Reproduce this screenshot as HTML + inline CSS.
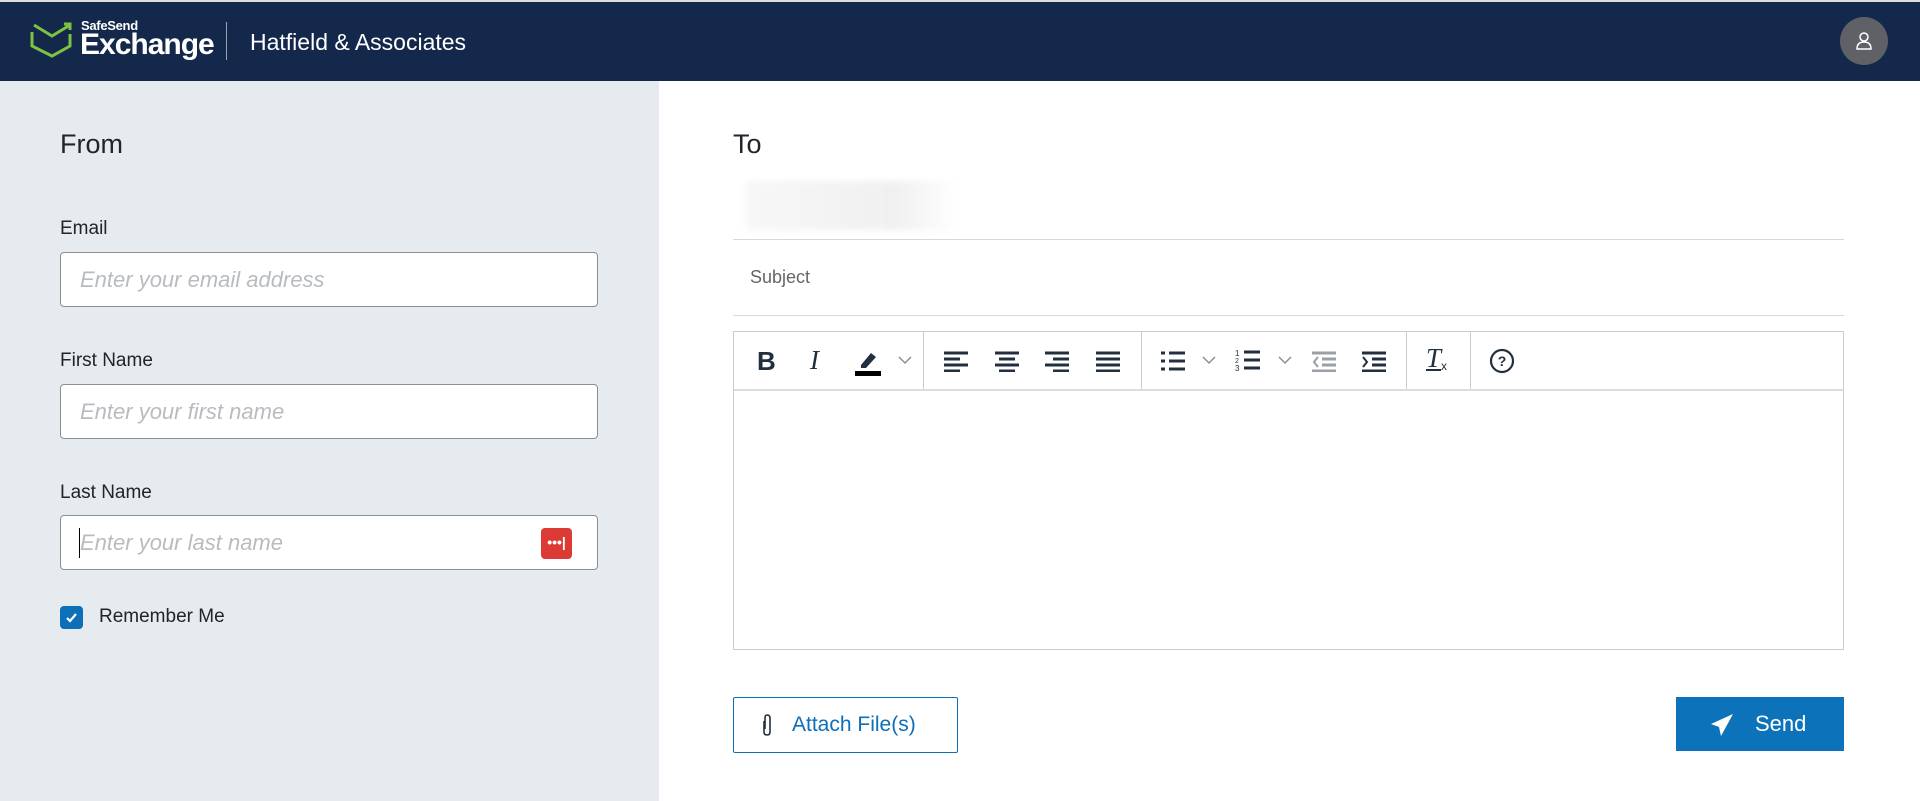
<!DOCTYPE html>
<html><head><meta charset="utf-8"><style>
*{box-sizing:border-box;margin:0;padding:0}
body{width:1920px;height:801px;overflow:hidden;font-family:"Liberation Sans",sans-serif;background:#fff;position:relative;color:#212529}
.hdr{position:absolute;left:0;top:0;width:1920px;height:81px;background:#14284b;border-top:2px solid #ddd}
.left{position:absolute;left:0;top:81px;width:659px;height:720px;background:#e6ebf0}
.a{position:absolute}
.lbl{position:absolute;left:60px;font-size:19px;color:#212529}
.inp{position:absolute;left:60px;width:538px;height:55px;background:#fff;border:1px solid #8a8f94;border-radius:4px;font-size:22px;font-style:italic;color:#b8bcc0;padding:14px 0 0 19px}
.line{position:absolute;left:733px;width:1111px;height:1px;background:#d8d8d8}
.tb{position:absolute;left:733px;top:331px;width:1111px;height:319px;border:1px solid #ccc}
.sep{position:absolute;top:331px;width:1px;height:58px;background:#ccc}
.ic{position:absolute;top:349px}
</style></head><body>
<div class="hdr">
 <svg class="a" style="left:30px;top:20px" width="44" height="36" viewBox="0 0 44 36"><path d="M4 3 L22 14 L40 3 M34 2 L40 2 L40 8" fill="none" stroke="#7dc242" stroke-width="3"/><path d="M2 10 L2 24 L22 34 L40 24 L40 12" fill="none" stroke="#7dc242" stroke-width="3"/></svg>
 <div class="a" style="left:81px;top:16px;color:#fff;font-size:13px;font-weight:bold;letter-spacing:-0.3px">SafeSend</div>
 <div class="a" style="left:80px;top:26px;color:#fff;font-size:30px;font-weight:bold;letter-spacing:-1px">Exchange</div>
 <div class="a" style="left:226px;top:20px;width:1px;height:38px;background:#9aa4b5"></div>
 <div class="a" style="left:250px;top:27px;color:#fff;font-size:23px">Hatfield &amp; Associates</div>
 <div class="a" style="left:1840px;top:15px;width:48px;height:48px;border-radius:50%;background:#5f6166"></div>
 <svg class="a" style="left:1854px;top:29px" width="20" height="20" viewBox="0 0 20 20"><circle cx="10" cy="6" r="4" fill="none" stroke="#fff" stroke-width="1.5"/><path d="M3 18 Q3 11 10 11 Q17 11 17 18 Z" fill="none" stroke="#fff" stroke-width="1.5"/></svg>
</div>
<div class="left"></div>
<div class="a" style="left:60px;top:129px;font-size:27px">From</div>
<div class="lbl" style="top:218px">Email</div>
<div class="inp" style="top:252px">Enter your email address</div>
<div class="lbl" style="top:350px">First Name</div>
<div class="inp" style="top:384px">Enter your first name</div>
<div class="lbl" style="top:482px">Last Name</div>
<div class="inp" style="top:515px">Enter your last name</div>
<div class="a" style="left:79px;top:528px;width:1px;height:30px;background:#000"></div>
<div class="a" style="left:541px;top:528px;width:31px;height:31px;background:#dc3b35;border-radius:4px;color:#fff;font-size:14px;font-weight:bold;text-align:center;line-height:29px">•••|</div>
<div class="a" style="left:60px;top:606px;width:23px;height:23px;background:#0c6fb8;border-radius:4px"></div>
<svg class="a" style="left:64px;top:610px" width="15" height="15" viewBox="0 0 15 15"><path d="M3 8 L6 11 L12 4" fill="none" stroke="#fff" stroke-width="2.2"/></svg>
<div class="a" style="left:99px;top:606px;font-size:19px">Remember Me</div>

<div class="a" style="left:733px;top:129px;font-size:27px">To</div>
<div class="a" style="left:746px;top:181px;width:213px;height:49px;background:linear-gradient(90deg,#f7f7f7,#f0f0f0 70%,#fff);filter:blur(3px)"></div>
<div class="line" style="top:239px"></div>
<div class="a" style="left:750px;top:267px;font-size:18px;color:#666">Subject</div>
<div class="line" style="top:315px"></div>
<div class="tb"></div>
<div class="a" style="left:734px;top:389px;width:1109px;height:2px;background:#ddd"></div>
<div class="sep" style="left:923px"></div><div class="sep" style="left:1141px"></div><div class="sep" style="left:1406px"></div><div class="sep" style="left:1470px"></div>
<div class="ic" style="left:757px;top:346px;font-size:26px;font-weight:bold;color:#222f3e">B</div>
<div class="ic" style="left:810px;top:345px;font-size:27px;font-style:italic;font-family:'Liberation Serif',serif;color:#222f3e">I</div>
<svg class="ic" style="left:853px" width="30" height="28" viewBox="0 0 30 28"><path d="M8 16 L18 4 L23 8 L13 19 L8 19Z" fill="#222f3e"/><rect x="2" y="22" width="26" height="5" fill="#000"/></svg>
<svg class="ic" style="left:898px;top:355px" width="14" height="10"><path d="M1 2 L7 8 L13 2" fill="none" stroke="#8a9099" stroke-width="1.5"/></svg>
<svg class="ic" style="left:943px;top:350px" width="26" height="22"><g stroke="#222f3e" stroke-width="3"><path d="M1 3H25M1 9H17M1 15H25M1 21H17"/></g></svg>
<svg class="ic" style="left:994px;top:350px" width="26" height="22"><g stroke="#222f3e" stroke-width="3"><path d="M1 3H25M5 9H21M1 15H25M5 21H21"/></g></svg>
<svg class="ic" style="left:1044px;top:350px" width="26" height="22"><g stroke="#222f3e" stroke-width="3"><path d="M1 3H25M9 9H25M1 15H25M9 21H25"/></g></svg>
<svg class="ic" style="left:1095px;top:350px" width="26" height="22"><g stroke="#222f3e" stroke-width="3"><path d="M1 3H25M1 9H25M1 15H25M1 21H25"/></g></svg>
<svg class="ic" style="left:1160px;top:350px" width="26" height="22"><g stroke="#222f3e" stroke-width="3"><path d="M9 3H25M9 11H25M9 19H25M1 3H5M1 11H5M1 19H5"/></g></svg>
<svg class="ic" style="left:1202px;top:355px" width="14" height="10"><path d="M1 2 L7 8 L13 2" fill="none" stroke="#8a9099" stroke-width="1.5"/></svg>
<svg class="ic" style="left:1235px;top:348px" width="26" height="24"><g stroke="#222f3e" stroke-width="3"><path d="M9 4H25M9 12H25M9 20H25"/></g><text x="0" y="8" font-size="8" fill="#222f3e">1</text><text x="0" y="15" font-size="7" fill="#222f3e">2</text><text x="0" y="23" font-size="8" fill="#222f3e">3</text></svg>
<svg class="ic" style="left:1278px;top:355px" width="14" height="10"><path d="M1 2 L7 8 L13 2" fill="none" stroke="#8a9099" stroke-width="1.5"/></svg>
<svg class="ic" style="left:1311px;top:350px" width="26" height="22"><g stroke="#9aa0a6" stroke-width="3"><path d="M1 3H25M11 9H25M11 15H25M1 21H25"/><path d="M7 7 L3 12 L7 17" fill="none" stroke-width="2"/></g></svg>
<svg class="ic" style="left:1361px;top:350px" width="26" height="22"><g stroke="#222f3e" stroke-width="3"><path d="M1 3H25M11 9H25M11 15H25M1 21H25"/><path d="M2 7 L6 12 L2 17" fill="none" stroke-width="2"/></g></svg>
<div class="ic" style="left:1426px;top:343px;font-size:27px;font-style:italic;font-family:'Liberation Serif',serif;color:#222f3e;text-decoration:underline">T</div>
<div class="ic" style="left:1441px;top:359px;font-size:12px;color:#222f3e">x</div>
<svg class="ic" style="left:1489px;top:348px" width="26" height="26"><circle cx="13" cy="13" r="11" fill="none" stroke="#222f3e" stroke-width="2.2"/><text x="13" y="18" text-anchor="middle" font-size="14" font-weight="bold" fill="#222f3e" font-family="Liberation Sans">?</text></svg>

<div class="a" style="left:733px;top:697px;width:225px;height:56px;border:1px solid #0c6fb8;border-radius:2px"></div>
<svg class="a" style="left:761px;top:713px" width="12" height="24"><path d="M3 8 L3 19 Q3 22 6 22 Q9 22 9 19 L9 5 Q9 2 6 2 Q4 2 4 5 L4 16" fill="none" stroke="#222f3e" stroke-width="1.6"/></svg>
<div class="a" style="left:792px;top:713px;font-size:21px;color:#0c6fb8">Attach File(s)</div>
<div class="a" style="left:1676px;top:697px;width:168px;height:54px;background:#0c73bb"></div>
<svg class="a" style="left:1710px;top:713px" width="24" height="24"><path d="M23 1 L1 11 L9 14 L11 23 Z" fill="#fff"/></svg>
<div class="a" style="left:1755px;top:711px;font-size:22px;color:#fff">Send</div>
</body></html>
